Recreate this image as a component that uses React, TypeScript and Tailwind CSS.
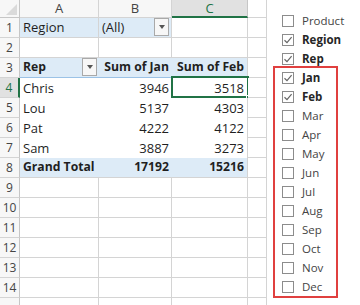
import React from "react";

const font = { fontFamily: '"Open Sans", "Noto Sans", sans-serif' };

type CellDef = {
  text?: string;
  bold?: boolean;
  right?: boolean;
  blue?: boolean;
  drop?: boolean;
  noR?: boolean;
  noB?: boolean;
  blueB?: boolean;
};

const rows: CellDef[][] = [
  [{ text: "Region", blue: true }, { text: "(All)", blue: true, drop: true }, {}, {}],
  [{}, {}, {}, {}],
  [
    { text: "Rep", bold: true, blue: true, drop: true, noR: true, blueB: true },
    { text: "Sum of Jan", bold: true, right: true, blue: true, noR: true, blueB: true },
    { text: "Sum of Feb", bold: true, right: true, blue: true, blueB: true },
    {},
  ],
  [{ text: "Chris", noR: true, noB: true }, { text: "3946", right: true, noR: true, noB: true }, { text: "3518", right: true, noB: true }, {}],
  [{ text: "Lou", noR: true, noB: true }, { text: "5137", right: true, noR: true, noB: true }, { text: "4303", right: true, noB: true }, {}],
  [{ text: "Pat", noR: true, noB: true }, { text: "4222", right: true, noR: true, noB: true }, { text: "4122", right: true, noB: true }, {}],
  [{ text: "Sam", noR: true, noB: true }, { text: "3887", right: true, noR: true, noB: true }, { text: "3273", right: true, noB: true }, {}],
  [
    { text: "Grand Total", bold: true, blue: true, noR: true },
    { text: "17192", bold: true, right: true, blue: true, noR: true },
    { text: "15216", bold: true, right: true, blue: true },
    {},
  ],
  [{}, {}, {}, {}],
  [{}, {}, {}, {}],
  [{}, {}, {}, {}],
  [{}, {}, {}, {}],
  [{}, {}, {}, {}],
  [{}, {}, {}, {}],
];

function DropButton() {
  return (
    <span className="absolute right-[2px] top-[0px] flex h-[18px] w-[15px] items-center justify-center border border-[#a9a9a9] bg-[#f7f7f7]">
      <span className="h-0 w-0 border-x-[3.5px] border-t-[4px] border-x-transparent border-t-[#555]" />
    </span>
  );
}

function Cell({ c, row, col }: { c: CellDef; row: number; col: number }) {
  const widths = ["w-[79px]", "w-[73px]", "w-[76px]", "w-[19px]"];
  let cls = `relative flex h-[20px] shrink-0 items-center px-[3px] ${widths[col]} `;
  cls += c.blue ? "bg-[#ddebf7] " : "bg-white ";
  cls += c.noR ? "" : "border-r border-r-[#d4d4d4] ";
  if (c.blueB) cls += "border-b border-b-[#9bc2e6] ";
  else if (!c.noB) cls += "border-b border-b-[#d4d4d4] ";
  cls += c.right ? "justify-end " : "";
  cls += c.bold ? "text-[12.2px] font-bold text-[#1f1f1f] " : "text-[13px] text-[#1f1f1f] ";
  return (
    <div className={cls}>
      <span className="whitespace-nowrap leading-none">{c.text}</span>
      {c.drop && <DropButton />}
      {row === 3 && col === 2 && (
        <span className="pointer-events-none absolute -left-[1px] -top-[2px] h-[22px] w-[78px] border-2 border-[#217346]">
          <span className="absolute -bottom-[4px] -right-[4px] h-[5px] w-[5px] border border-white bg-[#217346]" />
        </span>
      )}
    </div>
  );
}

function Sheet() {
  const cols = [
    { l: "A", w: "w-[79px]" },
    { l: "B", w: "w-[73px]" },
    { l: "C", w: "w-[76px]" },
    { l: "", w: "w-[19px]" },
  ];
  return (
    <div className="flex w-[267px] shrink-0 flex-col text-[13px]">
      <div className="flex h-[18px]">
        <div className="relative h-[18px] w-[20px] shrink-0 border-b border-r border-[#c6c6c6] bg-[#f7f7f7]">
          <span className="absolute bottom-[2px] right-[2px] h-0 w-0 border-b-[11px] border-l-[11px] border-l-transparent border-b-[#dadada]" />
        </div>
        {cols.map((c) =>
          c.l === "C" ? (
            <div key={c.l} className={`${c.w} flex h-[18px] shrink-0 items-center justify-center border-b-2 border-r border-b-[#217346] border-r-[#c6c6c6] bg-[#e1e1e1] leading-none text-[#217346]`}>
              {c.l}
            </div>
          ) : (
            <div key={c.l + "x"} className={`${c.w} flex h-[18px] shrink-0 items-center justify-center border-b border-r border-[#d4d4d4] leading-none ${c.l ? "bg-[#f7f7f7]" : "bg-white"} text-[#444]`}>
              {c.l}
            </div>
          )
        )}
      </div>
      {rows.map((r, i) => (
        <div key={i} className="flex h-[20px]">
          <div
            className={`flex h-[20px] w-[20px] shrink-0 items-center justify-center border-b border-[#d4d4d4] text-[12px] leading-none ${
              i === 3 ? "border-r-2 border-r-[#217346] bg-[#e1e1e1] text-[#217346]" : "border-r border-r-[#c6c6c6] bg-[#f7f7f7] text-[#444]"
            }`}
          >
            {i + 1}
          </div>
          {r.map((c, j) => (
            <Cell key={j} c={c} row={i} col={j} />
          ))}
        </div>
      ))}
      <div className="flex h-[20px]">
        <div className="h-[20px] w-[20px] shrink-0 border-r border-[#c6c6c6] bg-[#f7f7f7]" />
        {cols.map((c) => (
          <div key={c.l + "z"} className={`${c.w} h-[20px] shrink-0 border-r border-[#d4d4d4]`} />
        ))}
      </div>
    </div>
  );
}

function Check({ on }: { on: boolean }) {
  return (
    <span className="flex h-[12px] w-[12px] shrink-0 items-center justify-center border border-[#8c8c8c] bg-white">
      {on && (
        <svg width="10" height="10" viewBox="0 0 10 10">
          <path d="M1.5 5.2 L4 7.6 L8.6 2.2" fill="none" stroke="#666" strokeWidth="1.2" />
        </svg>
      )}
    </span>
  );
}

function Field({ label, on }: { label: string; on: boolean }) {
  return (
    <div className="flex h-[19px] items-center gap-[8px]">
      <Check on={on} />
      <span className={on ? "font-bold text-[#262626]" : "text-[#444]"}>{label}</span>
    </div>
  );
}

function FieldList() {
  const months = ["Mar", "Apr", "May", "Jun", "Jul", "Aug", "Sep", "Oct", "Nov", "Dec"];
  return (
    <div className="flex flex-1 flex-col bg-white pl-[15px] pt-[11px] text-[11.5px]">
      <div>
        <Field label="Product" on={false} />
        <Field label="Region" on />
        <Field label="Rep" on />
      </div>
      <div className="-ml-[9px] -mt-[2px] w-[65px] border-2 border-[#e0403f] pl-[7px]">
        <Field label="Jan" on />
        <Field label="Feb" on />
        {months.map((m) => (
          <Field key={m} label={m} on={false} />
        ))}
      </div>
    </div>
  );
}

export default function App() {
  return (
    <div className="flex h-[305px] w-[360px] overflow-hidden bg-white" style={font}>
      <Sheet />
      <FieldList />
    </div>
  );
}
